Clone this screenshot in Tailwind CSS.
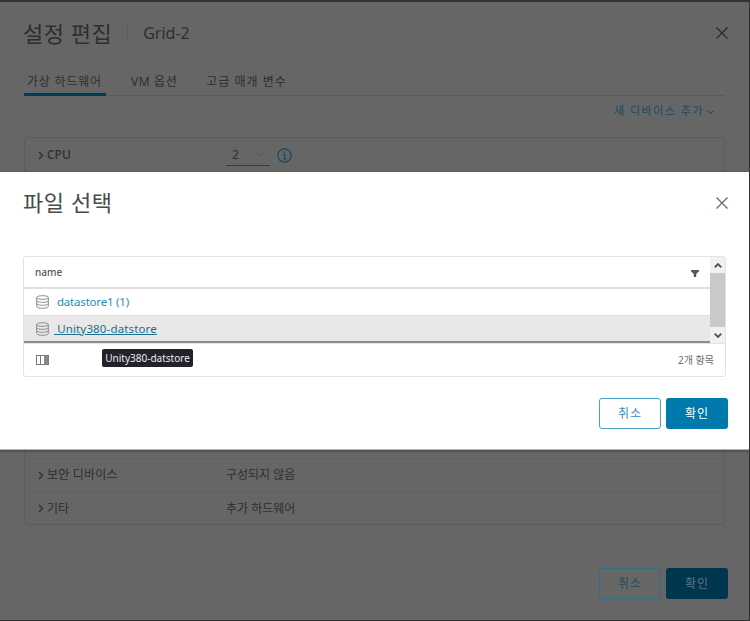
<!DOCTYPE html>
<html lang="ko">
<head>
  <meta charset="utf-8" />
  <title>설정 편집</title>
  <script src="https://cdn.jsdelivr.net/npm/@tailwindcss/browser@4"></script>
</head>
<body class="m-0 overflow-hidden bg-[#666666] font-['Noto_Sans','Noto_Sans_CJK_KR',sans-serif]">
  <div class="relative h-[621px] w-[750px] overflow-hidden">

    <!-- Dimmed edit settings dialog -->
    <div class="flex h-[621px] w-[750px] flex-col border-t-2 border-r border-b border-t-[#333333] border-r-[#333333] border-b-[#333333] bg-[#666666]">
      <header class="flex h-[60px] items-center pl-[23px] pr-[21px] pt-[1px]">
        <h1 class="text-[22px] leading-none tracking-[0.5px] text-[#2e2e2e]">설정 편집</h1>
        <span class="mx-[15px] h-[19px] w-px bg-[#5c5c5c]"></span>
        <span class="text-[16px] text-[#2e2e2e]">Grid-2</span>
        <svg class="ml-auto h-[12px] w-[12px]" viewBox="0 0 12 12" fill="none" stroke="#2a2a2a" stroke-width="1.2"><path d="M.5.5l11 11M11.500.5l-11 11" /></svg>
      </header>

      <nav class="mx-6 mt-[7px] flex h-[27px] items-start border-b border-[#5c5c5c] text-[12px] text-[#2e2e2e]">
        <span class="h-[27px] w-[82px] border-b-[3px] border-[#003d59] pl-[3px] pt-[4px] tracking-[0.8px] whitespace-nowrap">가상 하드웨어</span>
        <span class="ml-[25px] pt-[4px] tracking-[0.6px]">VM 옵션</span>
        <span class="ml-[29px] pt-[4px] tracking-[1px]">고급 매개 변수</span>
      </nav>

      <div class="mx-6 flex h-[41px] items-start justify-end pr-[11px] pt-[7px] text-[11px] tracking-[1.500px] text-[#1d4a5e]">
        새 디바이스 추가
        <svg class="ml-[3px] mt-[7px] h-[5px] w-[7px]" viewBox="0 0 7 5" fill="none" stroke="#1d4a5e" stroke-width="1.100"><path d="M.8.8L3.500 3.800 6.200.8" /></svg>
      </div>

      <section class="mx-6 flex h-[388px] flex-col rounded-[3px] border border-[#5c5c5c] text-[12px] text-[#2e2e2e]">
        <div class="flex h-[34px] items-center">
          <svg class="ml-[13px] mr-[3px] h-[9px] w-[6px]" viewBox="0 0 6 9" fill="none" stroke="#2e2e2e" stroke-width="1.300"><path d="M1 1l3.500 3.500L1 8" /></svg>
          <span class="w-[179px] font-medium">CPU</span>
          <span class="flex h-[22px] w-[44px] items-center justify-between border-b border-[#2e3f46] pl-[6px] pr-[5px]">
            2
            <svg class="h-[5px] w-[9px]" viewBox="0 0 9 5" fill="none" stroke="#525252" stroke-width="1"><path d="M.5.5l4 3.500 4-3.500" /></svg>
          </span>
          <svg class="ml-[7px] h-[15px] w-[15px]" viewBox="0 0 15 15" fill="none" stroke="#124a63" stroke-width="1.200"><circle cx="7.500" cy="7.500" r="6.700" /><path d="M6 6.500h1.700V11M6 11h3.400M7.500 3.500v1.500" /></svg>
        </div>
        <div class="flex-1"></div>
        <div class="flex h-[34px] items-center border-t border-[#5a6364] pb-[1px]">
          <svg class="ml-[13px] mr-[3px] h-[9px] w-[6px]" viewBox="0 0 6 9" fill="none" stroke="#2e2e2e" stroke-width="1.300"><path d="M1 1l3.500 3.500L1 8" /></svg>
          <span class="w-[179px] tracking-[0.2px]">보안 디바이스</span>
          <span>구성되지 않음</span>
        </div>
        <div class="flex h-[32px] items-center border-t border-[#5a6364]">
          <svg class="ml-[13px] mr-[3px] h-[9px] w-[6px]" viewBox="0 0 6 9" fill="none" stroke="#2e2e2e" stroke-width="1.300"><path d="M1 1l3.500 3.500L1 8" /></svg>
          <span class="w-[179px]">기타</span>
          <span>추가 하드웨어</span>
        </div>
      </section>

      <footer class="flex flex-1 items-end justify-end gap-[5px] pb-[21px] pr-[21px] text-[12px] tracking-[1px]">
        <button class="h-[31px] w-[62px] rounded-[3px] border border-[#2f6f8c] text-[#2c4a57]">취소</button>
        <button class="h-[31px] w-[62px] rounded-[3px] bg-[#00364f] text-[#5b7582]">확인</button>
      </footer>
    </div>

    <!-- File picker modal on top -->
    <div class="absolute left-0 top-[172px] flex h-[278px] w-[749px] flex-col border-b border-[#b5b5b5] bg-white shadow-[0_1px_3px_rgba(0,0,0,0.35)]">
      <header class="flex h-[60px] items-center pl-[23px] pr-[21px]">
        <h2 class="text-[22px] leading-none tracking-[0.6px] text-[#4a4a4a]">파일 선택</h2>
        <svg class="ml-auto mt-[2px] h-[12px] w-[12px]" viewBox="0 0 12 12" fill="none" stroke="#5a6b75" stroke-width="1.200"><path d="M.5.5l11 11M11.500.5l-11 11" /></svg>
      </header>

      <div class="relative ml-[23px] mt-[24px] flex h-[121px] w-[703px] flex-col rounded-[3px] border border-[#dde3e7] text-[#565656]">
        <div class="flex h-[86px]">
          <div class="flex w-[686px] flex-col">
            <div class="flex h-[32px] items-center justify-between border-b-2 border-[#e0e0e0] pl-[11px] pr-[11px] text-[10px] font-medium">
              name
              <svg class="mt-[3px] h-[7px] w-[8px]" viewBox="0 0 8 7" fill="#565656"><path d="M0 0h8v1.300L5.200 4v3H2.800V4L0 1.300z" /></svg>
            </div>
            <div class="flex h-[27px] items-center border-b border-[#dcdcdc] pl-[12px] text-[11.500px] tracking-[-0.2px] text-[#1f8cb8]">
              <svg class="h-[14px] w-[13px]" viewBox="0 0 13 14" fill="none" stroke="#8a8a8a" stroke-width="1"><path d="M.7 2.500C.7 1.300 3.400.7 6.500.7s5.800.6 5.800 1.800v9c0 1.200-2.700 1.800-5.800 1.800S.7 12.700.7 11.500zM.7 2.500c0 1.200 2.700 1.800 5.800 1.800s5.800-.6 5.800-1.800M.7 5.500c0 1.200 2.700 1.800 5.800 1.800s5.800-.6 5.800-1.800M.7 8.500c0 1.200 2.700 1.800 5.800 1.800s5.800-.6 5.800-1.800" /></svg>
              <span class="ml-[8px]">datastore1 (1)</span>
            </div>
            <div class="flex h-[27px] items-center border-b-2 border-[#8c8c8c] bg-[#e8e8e8] pl-[12px] text-[11.500px] tracking-[0.15px] text-[#19708f]">
              <svg class="h-[14px] w-[13px]" viewBox="0 0 13 14" fill="none" stroke="#8a8a8a" stroke-width="1"><path d="M.7 2.500C.7 1.300 3.400.7 6.500.7s5.800.6 5.800 1.800v9c0 1.200-2.700 1.800-5.800 1.800S.7 12.700.7 11.500zM.7 2.500c0 1.200 2.700 1.800 5.800 1.800s5.800-.6 5.800-1.800M.7 5.500c0 1.200 2.700 1.800 5.800 1.800s5.800-.6 5.800-1.800M.7 8.500c0 1.200 2.700 1.800 5.800 1.800s5.800-.6 5.800-1.800" /></svg>
              <span class="ml-[5px] underline">&nbsp;Unity380-datstore</span>
            </div>
          </div>
          <div class="flex w-[15px] flex-col bg-[#f1f1f1]">
            <div class="flex h-[16px] items-center justify-center">
              <svg class="h-[5px] w-[8px]" viewBox="0 0 8 5" fill="none" stroke="#505050" stroke-width="1.800"><path d="M.7 4.300L4 1l3.300 3.300" /></svg>
            </div>
            <div class="h-[54px] bg-[#c9c9c9]"></div>
            <div class="flex flex-1 items-center justify-center">
              <svg class="h-[5px] w-[8px]" viewBox="0 0 8 5" fill="none" stroke="#505050" stroke-width="1.800"><path d="M.7.7L4 4l3.300-3.300" /></svg>
            </div>
          </div>
        </div>
        <div class="flex flex-1 items-center justify-between border-t border-[#e4e4e4] pl-[12px] pr-[11px] text-[10px] text-[#6b6b6b]">
          <svg class="h-[10px] w-[13px]" viewBox="0 0 13 10"><rect x=".5" y=".5" width="12" height="9" fill="#fff" stroke="#7a7a7a" /><rect x="8" y="1" width="4" height="8" fill="#8a8a8a" /><path d="M4.500 1v8" stroke="#7a7a7a" /></svg>
          <span>2개 항목</span>
        </div>
        <div class="absolute left-[78px] top-[92px] flex h-[18px] w-[91px] items-center justify-center whitespace-nowrap rounded-[2px] bg-[#22222c] text-[10px] text-[#ececec]">Unity380-datstore</div>
      </div>

      <footer class="mt-[21px] flex justify-end gap-[5px] pr-[21px] text-[12px] tracking-[1px]">
        <button class="h-[31px] w-[62px] rounded-[3px] border border-[#4a9fc9] text-[#3f8fb5]">취소</button>
        <button class="h-[31px] w-[62px] rounded-[3px] bg-[#0079ad] text-white">확인</button>
      </footer>
    </div>
  </div>
</body>
</html>
